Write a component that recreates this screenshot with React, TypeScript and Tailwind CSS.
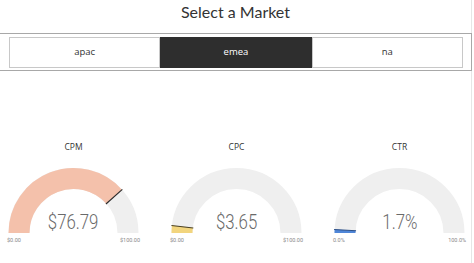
import React from "react";

type G = {
  title: string;
  value: string;
  frac: number;
  color: string;
  needle: string;
  min: string;
  max: string;
};

const gauges: G[] = [
  { title: "CPM", value: "$76.79", frac: 0.7679, color: "#f4c1ab", needle: "#2a2a2a", min: "$0.00", max: "$100.00" },
  { title: "CPC", value: "$3.65", frac: 0.0365, color: "#f2d57e", needle: "#4a4020", min: "$0.00", max: "$100.00" },
  { title: "CTR", value: "1.7%", frac: 0.017, color: "#4f86d8", needle: "#2d4f86", min: "0.0%", max: "100.0%" },
];

function Gauge({ g }: { g: G }) {
  const cx = 66.5;
  const cy = 70;
  const R = 65;
  const r = 44;
  const m = (R + r) / 2;
  const sw = R - r;
  const a = Math.PI * g.frac;
  const ex = cx - m * Math.cos(a);
  const ey = cy - m * Math.sin(a);
  const nx1 = cx - (r - 0.5) * Math.cos(a);
  const ny1 = cy - (r - 0.5) * Math.sin(a);
  const nx2 = cx - (R + 0.5) * Math.cos(a);
  const ny2 = cy - (R + 0.5) * Math.sin(a);
  return (
    <div className="flex w-[133px] flex-col items-center">
      <div className="h-[12px] text-[8.5px] leading-[12px] text-[#333]" style={{ fontFamily: '"Open Sans", sans-serif' }}>
        {g.title}
      </div>
      <div className="relative mt-[10px] h-[71px] w-[133px]">
        <svg width="133" height="71" viewBox="0 0 133 71" className="block">
          <path d={`M ${cx - m} ${cy} A ${m} ${m} 0 0 1 ${cx + m} ${cy}`} fill="none" stroke="#efefef" strokeWidth={sw} />
          <path d={`M ${cx - m} ${cy} A ${m} ${m} 0 0 1 ${ex} ${ey}`} fill="none" stroke={g.color} strokeWidth={sw} />
          <line x1={nx1} y1={ny1} x2={nx2} y2={ny2} stroke={g.needle} strokeWidth="1.1" />
        </svg>
        <div className="absolute left-0 right-0 top-[49px] flex justify-center">
          <span
            className="inline-block origin-center scale-x-[0.84] text-[20px] font-light leading-[20px] text-[#6a6a6a]"
            style={{ fontFamily: "Roboto, sans-serif" }}
          >
            {g.value}
          </span>
        </div>
      </div>
      <div
        className="mt-[2px] flex w-[133px] justify-between text-[5.5px] leading-[8px] text-[#888]"
        style={{ fontFamily: "Roboto, sans-serif" }}
      >
        <span>{g.min}</span>
        <span>{g.max}</span>
      </div>
    </div>
  );
}

export default function App() {
  const markets = ["apac", "emea", "na"];
  return (
    <div className="relative h-[263px] w-[474px] overflow-hidden bg-white" style={{ fontFamily: '"Open Sans", sans-serif' }}>
      <div className="h-[263px] w-[472px] border-r border-[#e6e6e6]">
        <div className="flex h-[33px] justify-center">
          <span className="text-[16px] leading-[24px] text-[#333]" style={{ fontFamily: "Lato, sans-serif" }}>
            Select a Market
          </span>
        </div>
        <div className="h-[38px] w-[472px] border-y border-r border-[#a8a8a8] pl-[9px] pr-[8px] pt-[3px] pb-[2px]">
          <div className="grid h-[31px] w-[454px] grid-cols-3">
            {markets.map((m) => (
              <div
                key={m}
                className={
                  m === "emea"
                    ? "flex items-center justify-center border border-[#2e2e2e] bg-[#2e2e2e] text-[9.5px] text-white"
                    : "flex items-center justify-center border border-[#c8c8c8] bg-white text-[9.5px] text-[#333]"
                }
              >
                {m}
              </div>
            ))}
          </div>
        </div>
        <div className="mt-[70px] flex gap-[30px] pl-[7px]">
          {gauges.map((g) => (
            <Gauge key={g.title} g={g} />
          ))}
        </div>
      </div>
    </div>
  );
}
